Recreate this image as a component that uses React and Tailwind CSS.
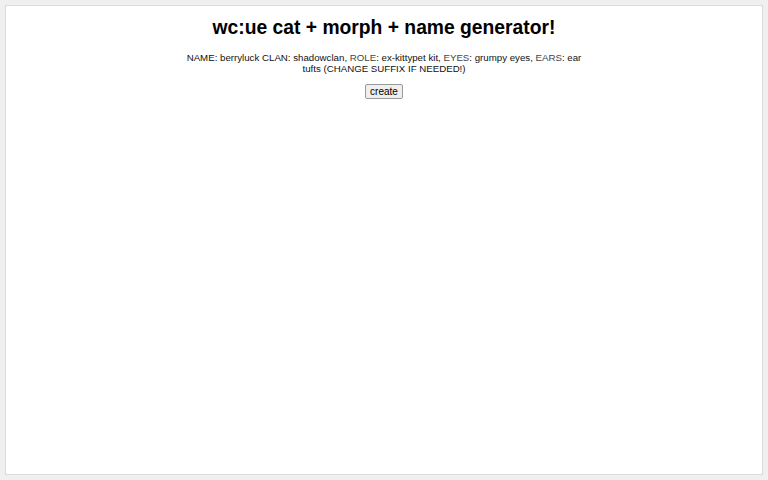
import React from 'react';

const App = () => {
    return (
        <div className="h-screen w-full bg-[#f0f0f0] p-[5px] font-['Liberation_Sans',Arial,sans-serif]">
            <div className="h-full w-full bg-white border border-[#dcdcdc] flex flex-col items-center pt-[10px]">
                <h1 className="text-[19.3px] leading-[24px] font-bold text-black">wc:ue cat + morph + name generator!</h1>
                <p className="mt-[12px] w-[400px] text-center text-[9.7px] leading-[11px] text-[#111]">
                    NAME: berryluck CLAN: shadowclan, <span className="text-[#444]">ROLE</span>: ex-kittypet kit, <span className="text-[#444]">EYES</span>: grumpy eyes, <span className="text-[#444]">EARS</span>: ear tufts (CHANGE SUFFIX IF NEEDED!)
                </p>
                <button className="mt-[10px] px-[4px] h-[15px] text-[10px] leading-[12px] text-black bg-[#efefef] border border-[#999] rounded-[2px]">
                    create
                </button>
            </div>
        </div>
    );
};

export default App;
